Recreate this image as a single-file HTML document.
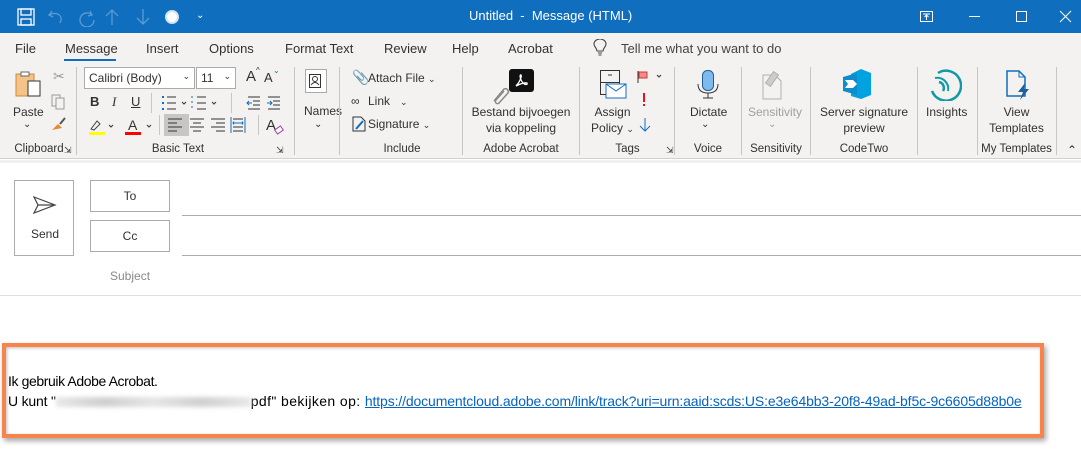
<!DOCTYPE html>
<html><head><meta charset="utf-8"><style>
*{margin:0;padding:0;box-sizing:border-box}
body{width:1081px;height:471px;overflow:hidden;background:#fff;font-family:"Liberation Sans",sans-serif;position:relative;color:#262626}
.a{position:absolute;white-space:nowrap}
.title{left:0;top:0;width:1081px;height:33px;background:#106ebe;color:#fff}
.tabs{left:0;top:33px;width:1081px;height:30px;background:#f3f2f1;font-size:13px;color:#323130}
.rib{left:0;top:63px;width:1081px;height:96px;background:#f3f2f1;border-bottom:1px solid #d2d0ce;font-size:12px;color:#323130}
.sep{position:absolute;top:4px;width:1px;height:88px;background:#c8c6c4}
.gl{position:absolute;top:80px;font-size:11.5px;color:#323130;text-align:center}
.c{text-align:center}
.box{position:absolute;border:1px solid #ababab;background:#fff;font-size:12px;text-align:center;color:#323130}
</style></head><body>
<div class="a title">
 <svg class="a" style="left:16px;top:7px" width="20" height="20" viewBox="0 0 20 20" fill="none" stroke="#fff" stroke-width="1.3"><rect x="2" y="2" width="16" height="16"/><rect x="5" y="2" width="10" height="6"/><rect x="5" y="12" width="10" height="6"/></svg>
 <svg class="a" style="left:46px;top:7px" width="140" height="20" viewBox="0 0 140 20" fill="none" stroke="#5a9bd5" stroke-width="1.3"><path d="M6 4 L3 8 L7 10 M3 8 C10 4 18 8 14 16"/><path d="M44 4 L46 8 L42 9 M46 8 A7 7 0 1 0 48 13"/><path d="M66 18 V3 M60 9 L66 3 L72 9"/><path d="M97 2 V17 M91 11 L97 17 L103 11"/><circle cx="126" cy="10" r="6" fill="#fff" stroke="#cfe3f5" stroke-width="2"/></svg>
 <div class="a" style="left:196px;top:10px;font-size:10px">&#8964;</div>
 <div class="a" style="left:469px;top:8px;font-size:13px">Untitled &nbsp;- &nbsp;Message (HTML)</div>
 <svg class="a" style="left:920px;top:8px" width="160" height="18" viewBox="0 0 160 18" fill="none" stroke="#fff" stroke-width="1"><rect x="0.5" y="3.5" width="12" height="10"/><path d="M3 6 H10 M6.5 12 V7 M4.5 9 L6.5 7 L8.5 9"/><path d="M49 8.5 H60"/><rect x="96.5" y="3.5" width="10" height="10"/><path d="M140 3 L151 14 M151 3 L140 14"/></svg>
</div>
<div class="a tabs">
 <span class="a" style="left:15px;top:8px">File</span>
 <span class="a" style="left:65px;top:8px">Message</span>
 <div class="a" style="left:64px;top:26px;width:52px;height:2px;background:#106ebe"></div>
 <span class="a" style="left:146px;top:8px">Insert</span>
 <span class="a" style="left:209px;top:8px">Options</span>
 <span class="a" style="left:285px;top:8px">Format Text</span>
 <span class="a" style="left:384px;top:8px">Review</span>
 <span class="a" style="left:452px;top:8px">Help</span>
 <span class="a" style="left:508px;top:8px">Acrobat</span>
 <svg class="a" style="left:593px;top:6px" width="14" height="18" viewBox="0 0 14 18" fill="none" stroke="#444" stroke-width="1.1"><path d="M4 12 C4 9 1 8 1 5 A6 5 0 0 1 13 5 C13 8 10 9 10 12 Z M5 14 H9 M5.5 16 H8.5"/></svg>
 <span class="a" style="left:621px;top:8px;color:#444">Tell me what you want to do</span>
</div>
<div class="a rib">
 <svg class="a" style="left:14px;top:7px" width="30" height="30" viewBox="0 0 30 30"><rect x="2" y="4" width="18" height="22" fill="#f3c38a" stroke="#d48a2e"/><rect x="7" y="2" width="8" height="4" fill="#fff" stroke="#666"/><rect x="14" y="11" width="12" height="15" fill="#fff" stroke="#333"/></svg>
 <span class="a" style="left:13px;top:42px">Paste</span>
 <span class="a" style="left:23px;top:56px;font-size:10px">&#8964;</span>
 <span class="a" style="left:53px;top:5px;color:#999;font-size:14px">&#9986;</span>
 <svg class="a" style="left:50px;top:30px" width="18" height="18"><rect x="2" y="2" width="8" height="11" fill="none" stroke="#999"/><rect x="6" y="5" width="8" height="11" fill="#f3f2f1" stroke="#999"/></svg>
 <svg class="a" style="left:50px;top:53px" width="18" height="16"><path d="M2 14 L8 8 L12 12 Z" fill="#e58a2e"/><path d="M10 8 L15 2" stroke="#555" stroke-width="2"/></svg>
 <div class="gl" style="left:4px;width:70px">Clipboard</div>
 <span class="a" style="left:64px;top:82px;font-size:9px">&#8690;</span>
 <div class="sep" style="left:76px"></div>
 <div class="box" style="left:84px;top:4px;width:111px;height:22px;text-align:left;padding:3px 4px">Calibri (Body)<span style="position:absolute;right:4px;font-size:9px">&#8964;</span></div>
 <div class="box" style="left:196px;top:4px;width:40px;height:22px;text-align:left;padding:3px 4px">11<span style="position:absolute;right:4px;font-size:9px">&#8964;</span></div>
 <span class="a" style="left:246px;top:5px;font-size:15px">A</span><span class="a" style="left:256px;top:3px;font-size:8px">^</span>
 <span class="a" style="left:264px;top:7px;font-size:13px">A</span><span class="a" style="left:273px;top:3px;font-size:8px;color:#106ebe">&#8964;</span>
 <span class="a" style="left:90px;top:31px;font-weight:bold;font-size:13px">B</span>
 <span class="a" style="left:112px;top:31px;font-style:italic;font-size:13px;font-family:'Liberation Serif'">I</span>
 <span class="a" style="left:131px;top:31px;text-decoration:underline;font-size:13px">U</span>
 <div class="a" style="left:151px;top:30px;width:1px;height:20px;background:#c8c6c4"></div>
 <svg class="a" style="left:160px;top:30px" width="120" height="20" viewBox="0 0 120 20" stroke="#333" fill="none"><path d="M2 4 H4 M2 10 H4 M2 16 H4" stroke="#106ebe" stroke-width="2"/><path d="M7 4 H16 M7 10 H16 M7 16 H16"/><path d="M22 9 L24 11 L26 9"/><path d="M37 4 H46 M37 10 H46 M37 16 H46"/><path d="M32 3 V17" stroke="#106ebe" stroke-dasharray="2 3"/><path d="M52 9 L54 11 L56 9"/><path d="M88 4 H100 M93 8 H100 M93 12 H100 M88 16 H100"/><path d="M92 10 H87 M89 8 L87 10 L89 12" stroke="#106ebe"/><path d="M108 4 H120 M113 8 H120 M113 12 H120 M108 16 H120"/><path d="M107 10 H112 M110 8 L112 10 L110 12" stroke="#106ebe"/></svg>
 <div class="a" style="left:231px;top:30px;width:1px;height:20px;background:#c8c6c4"></div>
 <svg class="a" style="left:87px;top:53px" width="70" height="20"><path d="M4 13 L10 5 L13 8 L7 14 Z" fill="none" stroke="#444"/><rect x="2" y="16" width="16" height="3" fill="#ffff00"/><path d="M22 9 L24 11 L26 9" stroke="#333" fill="none"/><text x="41" y="14" font-size="14" fill="#333" font-family="Liberation Sans">A</text><rect x="38" y="16" width="16" height="3" fill="#f00"/><path d="M60 9 L62 11 L64 9" stroke="#333" fill="none"/></svg>
 <div class="a" style="left:159px;top:52px;width:1px;height:20px;background:#c8c6c4"></div>
 <div class="a" style="left:164px;top:51px;width:25px;height:22px;background:#c8c6c4"></div>
 <svg class="a" style="left:167px;top:53px" width="80" height="18" viewBox="0 0 80 18" stroke="#333" fill="none"><path d="M1 3 H15 M1 7 H10 M1 11 H15 M1 15 H10"/><path d="M23 3 H37 M26 7 H34 M23 11 H37 M26 15 H34"/><path d="M44 3 H58 M49 7 H58 M44 11 H58 M49 15 H58"/><path d="M64 1 V17 M78 1 V17" stroke="#106ebe"/><path d="M66 3 H76 M66 15 H76 M66 11 H76"/><path d="M66 7 H76 M67 5.5 L66 7 L67 8.5 M75 5.5 L76 7 L75 8.5" stroke="#106ebe"/></svg>
 <div class="a" style="left:258px;top:52px;width:1px;height:20px;background:#c8c6c4"></div>
 <span class="a" style="left:266px;top:54px;font-size:15px">A</span><div class="a" style="left:275px;top:64px;width:8px;height:6px;background:#fff;border:1.5px solid #9b3ea6;transform:rotate(-35deg)"></div>
 <div class="gl" style="left:120px;width:116px">Basic Text</div>
 <span class="a" style="left:276px;top:82px;font-size:9px">&#8690;</span>
 <div class="sep" style="left:294px"></div>
 <div class="box" style="left:305px;top:6px;width:22px;height:24px;border-color:#aaa"></div>
 <svg class="a" style="left:308px;top:10px" width="14" height="16" fill="none" stroke="#333"><rect x="1.5" y="1.5" width="11" height="13"/><circle cx="7" cy="6" r="2.5"/><path d="M3 12 Q7 7 11 12"/></svg>
 <span class="a" style="left:304px;top:41px">Names</span>
 <span class="a" style="left:314px;top:56px;font-size:10px">&#8964;</span>
 <div class="sep" style="left:339px"></div>
 <span class="a" style="left:352px;top:6px;font-size:14px">&#128206;</span>
 <span class="a" style="left:368px;top:8px">Attach File <span style="font-size:9px">&#8964;</span></span>
 <span class="a" style="left:351px;top:31px">&#8734;</span>
 <span class="a" style="left:368px;top:31px">Link &nbsp;&nbsp;<span style="font-size:9px">&#8964;</span></span>
 <svg class="a" style="left:351px;top:52px" width="16" height="18" fill="none" stroke="#333"><path d="M2 2 H10 L14 6 V16 H2 Z"/><path d="M5 14 L12 6" stroke="#106ebe" stroke-width="2"/></svg>
 <span class="a" style="left:368px;top:54px">Signature <span style="font-size:9px">&#8964;</span></span>
 <div class="gl" style="left:340px;width:124px">Include</div>
 <div class="sep" style="left:462px"></div>
 <div class="a" style="left:509px;top:6px;width:25px;height:23px;background:#111;border-radius:3px"></div>
 <svg class="a" style="left:512px;top:9px" width="19" height="17"><path d="M4 14 C8 10 10 4 9 3 C8 2 7 6 11 11 C13 13 16 13 15 11 C12 10 6 13 4 14Z" fill="none" stroke="#fff" stroke-width="1.3"/></svg>
 <svg class="a" style="left:490px;top:20px" width="22" height="22"><path d="M4 18 L14 6 A3 3 0 0 1 18 10 L9 20 A2 2 0 0 1 6 17 L14 8" fill="none" stroke="#888" stroke-width="1.5"/></svg>
 <div class="a c" style="left:463px;top:41px;width:116px;line-height:16px">Bestand bijvoegen<br>via koppeling</div>
 <div class="gl" style="left:463px;width:116px">Adobe Acrobat</div>
 <div class="sep" style="left:579px"></div>
 <svg class="a" style="left:596px;top:6px" width="36" height="32" fill="none"><rect x="4.5" y="1.5" width="19" height="24" stroke="#333"/><path d="M4.5 13.5 H23.5 M12 6 H16" stroke="#333"/><rect x="10" y="15" width="20" height="14" fill="#fff" stroke="#106ebe"/><path d="M10 15 L20 22 L30 15" stroke="#106ebe"/></svg>
 <div class="a c" style="left:585px;top:41px;width:55px;line-height:16px">Assign<br>Policy <span style="font-size:9px">&#8964;</span></div>
 <svg class="a" style="left:637px;top:7px" width="30" height="14"><path d="M1 13 V1" stroke="#333"/><rect x="2" y="2" width="8" height="6" fill="#f28a8a" stroke="#d13438"/><path d="M20 5 L22 7 L24 5" stroke="#333" fill="none"/></svg>
 <div class="a" style="left:643px;top:30px;width:2px;height:9px;background:#e81123"></div><div class="a" style="left:643px;top:41px;width:2px;height:2px;background:#e81123"></div>
 <svg class="a" style="left:639px;top:54px" width="12" height="16" stroke="#106ebe" fill="none"><path d="M6 1 V14 M1 9 L6 14 L11 9"/></svg>
 <div class="gl" style="left:580px;width:95px">Tags</div>
 <span class="a" style="left:666px;top:82px;font-size:9px">&#8690;</span>
 <div class="sep" style="left:674px"></div>
 <svg class="a" style="left:693px;top:7px" width="30" height="30" fill="none"><rect x="9.5" y="0.5" width="11" height="20" rx="5" fill="#7fbaec" stroke="#1f5f99"/><path d="M5 14 Q5 23 15 23 Q25 23 25 14 M15 23 V28 M10 28 H20" stroke="#333"/></svg>
 <span class="a" style="left:690px;top:42px">Dictate</span>
 <span class="a" style="left:701px;top:56px;font-size:10px">&#8964;</span>
 <div class="gl" style="left:675px;width:66px">Voice</div>
 <div class="sep" style="left:741px"></div>
 <svg class="a" style="left:756px;top:6px" width="32" height="32" fill="none" stroke="#b0b0b0"><path d="M7 6 H19 L25 12 V30 H7 Z"/><rect x="13" y="3" width="6" height="14" transform="rotate(35 16 10)" fill="#ccc"/></svg>
 <span class="a" style="left:748px;top:42px;color:#a19f9d">Sensitivity</span>
 <span class="a" style="left:768px;top:56px;font-size:10px;color:#a19f9d">&#8964;</span>
 <div class="gl" style="left:742px;width:68px">Sensitivity</div>
 <div class="sep" style="left:810px"></div>
 <svg class="a" style="left:841px;top:6px" width="32" height="30"><path d="M10 5 L20 0 L30 4 V26 L20 30 L10 27 Z" fill="#00a2e0"/><path d="M2 8 L16 4 V26 L2 22 Z" fill="#0d8dcc"/><path d="M4 11 H12 L16 15 L12 19 H4 L7 15 Z" fill="#fff"/></svg>
 <div class="a c" style="left:811px;top:41px;width:106px;line-height:16px">Server signature<br>preview</div>
 <div class="gl" style="left:811px;width:106px">CodeTwo</div>
 <div class="sep" style="left:917px"></div>
 <svg class="a" style="left:926px;top:6px" width="36" height="32" fill="none" stroke="#0f9aa5" stroke-width="2.5"><path d="M6 22 A15 15 0 1 0 12 4"/><path d="M13 13 A6 6 0 0 1 17 22"/><path d="M9 9 A11 11 0 0 1 22 22" stroke-width="2"/></svg>
 <span class="a" style="left:926px;top:42px">Insights</span>
 <div class="sep" style="left:977px"></div>
 <svg class="a" style="left:1005px;top:6px" width="26" height="32" fill="none"><path d="M2 2 H14 L20 8 V27 H2 Z" stroke="#106ebe" stroke-width="1.5"/><path d="M14 2 V8 H20" stroke="#106ebe"/><path d="M20 14 L13 23 H18 L15 31 L24 20 H19 Z" fill="#1f5f99"/></svg>
 <div class="a c" style="left:978px;top:41px;width:77px;line-height:16px">View<br>Templates</div>
 <div class="gl" style="left:978px;width:77px">My Templates</div>
 <div class="sep" style="left:1056px"></div>
 <span class="a" style="left:1067px;top:80px;font-size:12px">&#8963;</span>
</div>
<div class="a" style="left:0;top:160px;width:1081px;height:3px;background:#f0f0f0"></div>
<div class="box" style="left:14px;top:180px;width:60px;height:76px;border-color:#ababab"></div>
<svg class="a" style="left:33px;top:196px" width="24" height="18" fill="none" stroke="#444" stroke-width="1.2"><path d="M1 1 L22 9 L1 17 L5 9 Z M5 9 H22"/></svg>
<span class="a" style="left:31px;top:227px;font-size:12px;color:#323130">Send</span>
<div class="box" style="left:90px;top:180px;width:80px;height:32px;padding-top:8px">To</div>
<div class="box" style="left:90px;top:220px;width:80px;height:32px;padding-top:8px">Cc</div>
<div class="a" style="left:182px;top:215px;width:899px;height:1px;background:#ababab"></div>
<div class="a" style="left:182px;top:255px;width:899px;height:1px;background:#ababab"></div>
<span class="a" style="left:110px;top:269px;font-size:12px;color:#8a8886">Subject</span>
<div class="a" style="left:0;top:295px;width:1081px;height:1px;background:#e1dfdd"></div>
<div class="a" style="left:2px;top:343px;width:1042px;height:95px;border:4px solid #f7844a;box-shadow:2px 3px 5px rgba(0,0,0,.35), inset 1px 1px 3px rgba(0,0,0,.25)"></div>
<div class="a" style="left:8px;top:371px;font-size:14px;color:#000;line-height:20px">
<div style="letter-spacing:-0.4px">Ik gebruik Adobe Acrobat.</div>
<div><span style="letter-spacing:-0.2px">U kunt "</span><span style="display:inline-block;width:195px;height:10px;background:linear-gradient(90deg,#e8e8e8,#cfcfcf,#e6e6e6,#d0d0d0,#e8e8e8);filter:blur(2px);vertical-align:middle"></span><span style="letter-spacing:0.4px">pdf" bekijken op: </span><span style="color:#0563c1;text-decoration:underline;letter-spacing:-0.13px">https://documentcloud.adobe.com/link/track?uri=urn:aaid:scds:US:e3e64bb3-20f8-49ad-bf5c-9c6605d88b0e</span></div>
</div>
</body></html>
